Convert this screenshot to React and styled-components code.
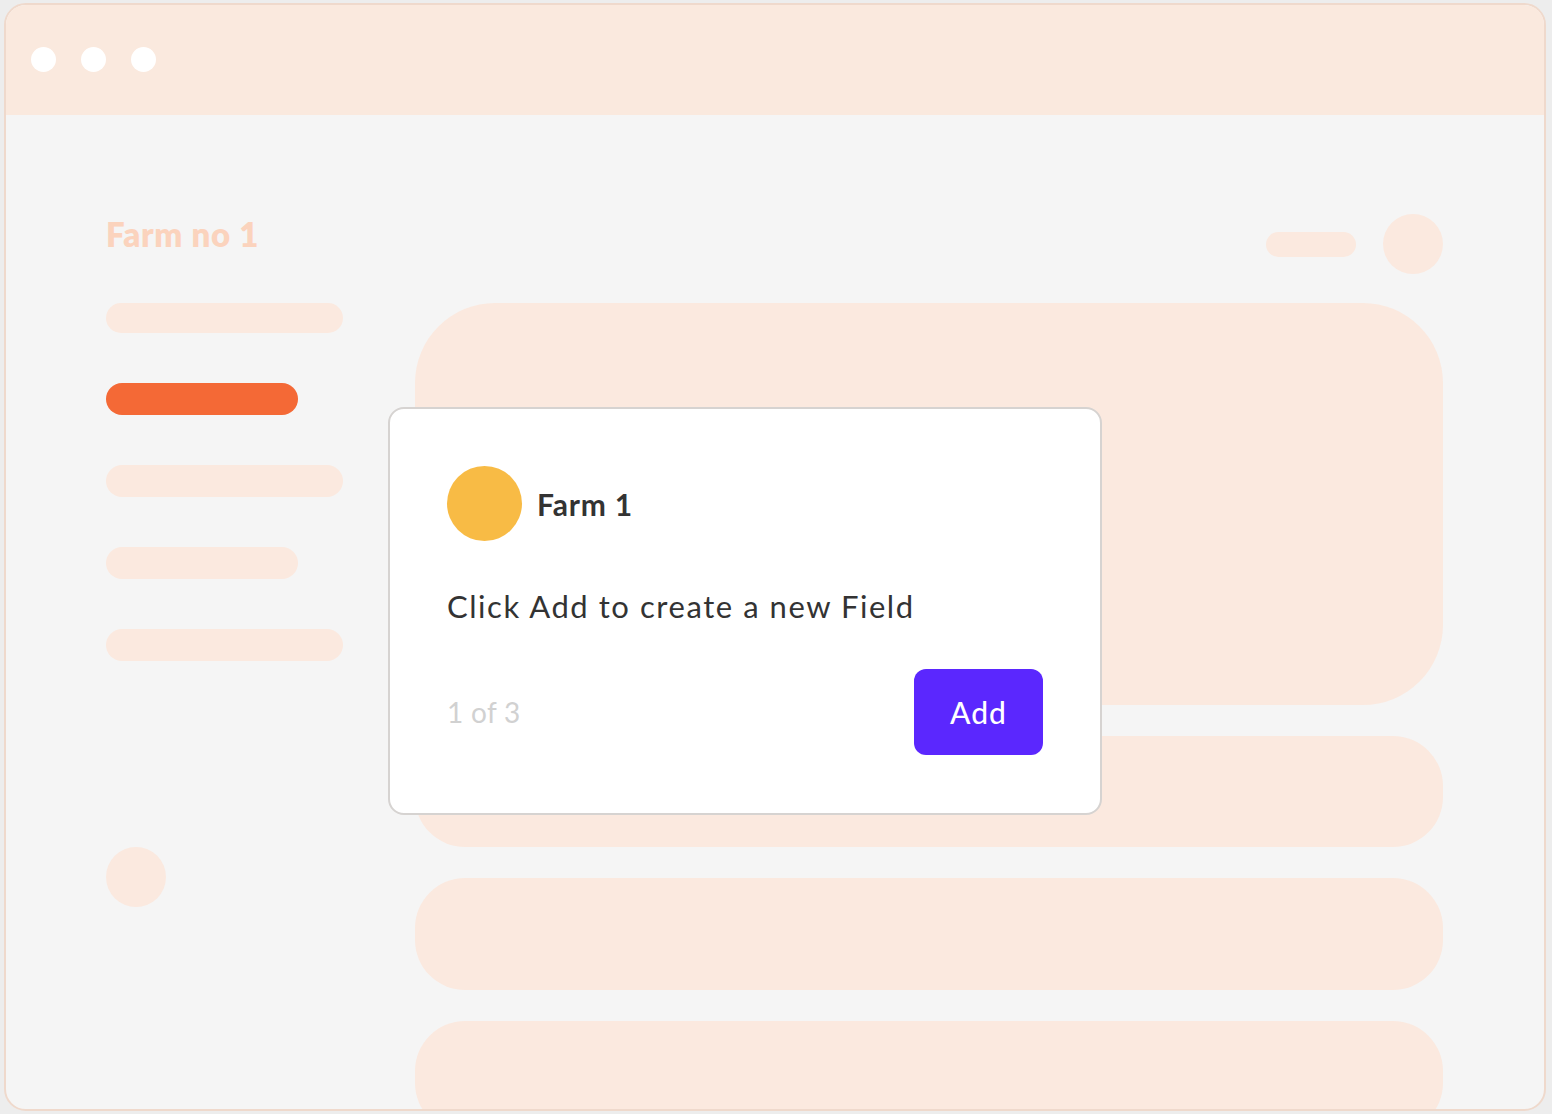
import React from "react";
import styled, { createGlobalStyle } from "styled-components";

const Global = createGlobalStyle`
  html, body { margin: 0; padding: 0; background: #ededed; }
  body { font-family: "Lato", "Noto Sans", sans-serif; }
  * { box-sizing: border-box; }
`;

const Frame = styled.div`
  margin: 3px 0 0 4px;
  width: 1542px;
  height: 1108px;
  border: 2px solid #efd9cc;
  border-radius: 22px;
  background: #f5f5f5;
  overflow: hidden;
  display: flex;
  flex-direction: column;
`;

const TitleBar = styled.div`
  height: 110px;
  flex: none;
  background: #fae9de;
  display: flex;
  align-items: center;
  gap: 25px;
  padding: 0 0 2px 25px;
`;

const Dot = styled.span`
  width: 25px;
  height: 25px;
  border-radius: 50%;
  background: #ffffff;
`;

const Body = styled.div`
  flex: 1;
  display: grid;
  grid-template-columns: 237px 1fr;
  grid-template-rows: 60px 1fr;
  column-gap: 72px;
  row-gap: 29px;
  padding: 99px 101px 0 100px;
  min-height: 0;
`;

const Title = styled.h1`
  margin: 4px 0 0 0;
  align-self: start;
  font-size: 33px;
  line-height: 33px;
  font-weight: 800;
  color: #fbd3bd;
  letter-spacing: 0.7px;
`;

const TopRight = styled.div`
  display: flex;
  align-items: center;
  justify-content: flex-end;
  gap: 27px;
`;

const Pill = styled.div`
  width: ${(p) => p.$w}px;
  height: ${(p) => p.$h}px;
  border-radius: 999px;
  background: ${(p) => (p.$active ? "#f46936" : "#fbe9df")};
`;

const Circle = styled.div`
  width: ${(p) => p.$size}px;
  height: ${(p) => p.$size}px;
  border-radius: 50%;
  background: ${(p) => p.$color || "#fbe9df"};
  flex: none;
`;

const Sidebar = styled.div`
  display: flex;
  flex-direction: column;
  align-items: flex-start;
  gap: 50px;
`;

const SideSpacer = styled.div`
  height: 86px;
`;

const Main = styled.div`
  position: relative;
  display: flex;
  flex-direction: column;
  gap: 31px;
`;

const Card = styled.div`
  height: ${(p) => p.$h}px;
  flex: none;
  border-radius: ${(p) => p.$r}px;
  background: #fbe9df;
`;

const Popup = styled.div`
  position: absolute;
  left: -27px;
  top: 104px;
  width: 714px;
  height: 408px;
  background: #ffffff;
  border: 2px solid #d6d3d1;
  border-radius: 16px;
  padding: 57px 57px 0 57px;
  display: flex;
  flex-direction: column;
`;

const Header = styled.div`
  display: flex;
  align-items: center;
  gap: 15px;
`;

const Name = styled.span`
  font-size: 30px;
  font-weight: 700;
  color: #333333;
  letter-spacing: 0.8px;
`;

const Message = styled.p`
  margin: 44px 0 0 0;
  font-size: 31px;
  font-weight: 400;
  color: #333333;
  line-height: 42px;
  letter-spacing: 1.55px;
`;

const Footer = styled.div`
  margin-top: 42px;
  display: flex;
  align-items: center;
  justify-content: space-between;
`;

const Counter = styled.span`
  font-size: 28px;
  color: #d1d1d1;
  font-weight: 400;
  letter-spacing: 0.3px;
`;

const AddButton = styled.button`
  width: 129px;
  height: 86px;
  border: none;
  border-radius: 12px;
  background: #5b27fe;
  color: #ffffff;
  font-family: inherit;
  font-size: 30px;
  font-weight: 500;
  letter-spacing: 1px;
  cursor: pointer;
`;

export default function App() {
  return (
    <>
      <Global />
      <Frame>
        <TitleBar>
          <Dot />
          <Dot />
          <Dot />
        </TitleBar>
        <Body>
          <Title>Farm no 1</Title>
          <TopRight>
            <Pill $w={90} $h={25} />
            <Circle $size={60} />
          </TopRight>
          <Sidebar>
            <Pill $w={237} $h={30} />
            <Pill $w={192} $h={32} $active />
            <Pill $w={237} $h={32} />
            <Pill $w={192} $h={32} />
            <Pill $w={237} $h={32} />
            <SideSpacer />
            <Circle $size={60} />
          </Sidebar>
          <Main>
            <Card $h={402} $r={80} />
            <Card $h={111} $r={50} />
            <Card $h={112} $r={50} />
            <Card $h={112} $r={50} />
            <Popup>
              <Header>
                <Circle $size={75} $color="#f8bb45" />
                <Name>Farm 1</Name>
              </Header>
              <Message>Click Add to create a new Field</Message>
              <Footer>
                <Counter>1 of 3</Counter>
                <AddButton>Add</AddButton>
              </Footer>
            </Popup>
          </Main>
        </Body>
      </Frame>
    </>
  );
}
